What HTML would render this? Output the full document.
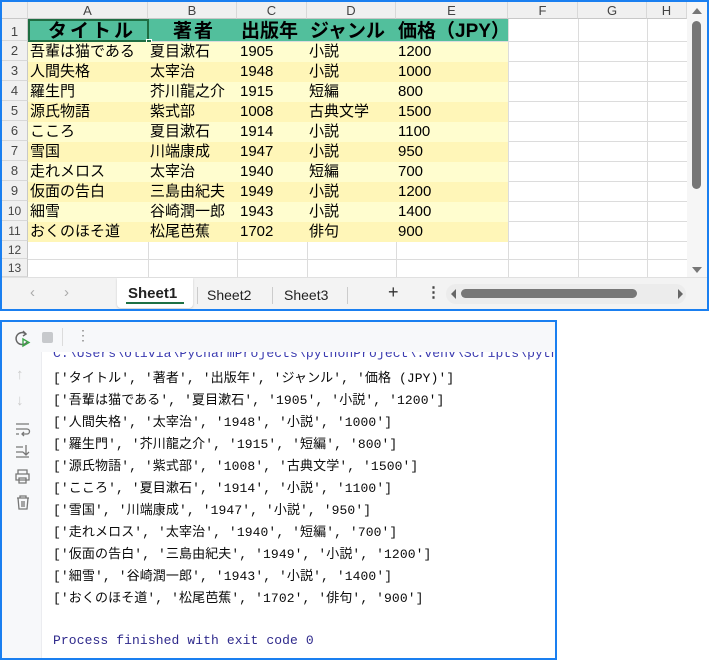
<!DOCTYPE html>
<html><head><meta charset="utf-8"><style>
*{margin:0;padding:0;box-sizing:border-box}
body{width:709px;height:660px;background:#fff;position:relative;overflow:hidden;font-family:"Liberation Sans","Noto Sans CJK JP",sans-serif}
.xl{position:absolute;left:0;top:0;width:709px;height:311px;border:2px solid #1a7ff0;background:#fff;overflow:hidden}
.abs{position:absolute}
.ch{position:absolute;top:0;height:17px;background:#f0f0f0;border-right:1px solid #d8d8d8;border-bottom:1px solid #c8c8c8;font-size:13px;color:#444;text-align:center;line-height:17px}
.rh{position:absolute;left:0;width:26px;background:#f0f0f0;border-bottom:1px solid #d8d8d8;border-right:1px solid #c8c8c8;font-size:12px;color:#444;text-align:center}
.row{position:absolute;left:26px;height:20px;font-size:15px;line-height:20px;color:#000}
.row span{position:absolute;top:0;white-space:nowrap}
.grid{position:absolute;background:#dcdcdc}
.con{position:absolute;left:0;top:320px;width:557px;height:340px;border:2px solid #1a7ff0;background:#fff;overflow:hidden}
.code{position:absolute;left:51px;font-family:"Liberation Mono","Noto Sans CJK JP",monospace;font-size:13px;color:#0a0a0a;white-space:pre;letter-spacing:0.1px}
</style></head><body>
<div class="xl">
 <div class="ch" style="left:0;width:26px"></div>
 <div class="ch" style="left:26px;width:120px">A</div>
 <div class="ch" style="left:146px;width:89px">B</div>
 <div class="ch" style="left:235px;width:70px">C</div>
 <div class="ch" style="left:305px;width:89px">D</div>
 <div class="ch" style="left:394px;width:112px">E</div>
 <div class="ch" style="left:506px;width:70px">F</div>
 <div class="ch" style="left:576px;width:69px">G</div>
 <div class="ch" style="left:645px;width:40px">H</div>
 <div class="grid" style="left:576px;top:17px;width:1px;height:258px"></div>
 <div class="grid" style="left:645px;top:17px;width:1px;height:258px"></div>
 <div class="grid" style="left:146px;top:239px;width:1px;height:36px"></div>
 <div class="grid" style="left:235px;top:239px;width:1px;height:36px"></div>
 <div class="grid" style="left:305px;top:239px;width:1px;height:36px"></div>
 <div class="grid" style="left:394px;top:239px;width:1px;height:36px"></div>
 <div class="grid" style="left:506px;top:17px;width:1px;height:258px"></div>
 <div class="grid" style="left:26px;top:39px;width:659px;height:1px"></div>
 <div class="grid" style="left:506px;top:59px;width:179px;height:1px"></div>
 <div class="grid" style="left:506px;top:79px;width:179px;height:1px"></div>
 <div class="grid" style="left:506px;top:99px;width:179px;height:1px"></div>
 <div class="grid" style="left:506px;top:119px;width:179px;height:1px"></div>
 <div class="grid" style="left:506px;top:139px;width:179px;height:1px"></div>
 <div class="grid" style="left:506px;top:159px;width:179px;height:1px"></div>
 <div class="grid" style="left:506px;top:179px;width:179px;height:1px"></div>
 <div class="grid" style="left:506px;top:199px;width:179px;height:1px"></div>
 <div class="grid" style="left:506px;top:219px;width:179px;height:1px"></div>
 <div class="grid" style="left:26px;top:239px;width:659px;height:1px"></div>
 <div class="grid" style="left:26px;top:257px;width:659px;height:1px"></div>
 <div class="rh" style="top:17px;height:22px;line-height:26px;font-size:13px">1</div>
 <div class="rh" style="top:39px;height:20px;line-height:20px;font-size:13px">2</div>
 <div class="rh" style="top:59px;height:20px;line-height:20px;font-size:13px">3</div>
 <div class="rh" style="top:79px;height:20px;line-height:20px;font-size:13px">4</div>
 <div class="rh" style="top:99px;height:20px;line-height:20px;font-size:13px">5</div>
 <div class="rh" style="top:119px;height:20px;line-height:20px;font-size:13px">6</div>
 <div class="rh" style="top:139px;height:20px;line-height:20px;font-size:13px">7</div>
 <div class="rh" style="top:159px;height:20px;line-height:20px;font-size:13px">8</div>
 <div class="rh" style="top:179px;height:20px;line-height:20px;font-size:13px">9</div>
 <div class="rh" style="top:199px;height:20px;line-height:20px">10</div>
 <div class="rh" style="top:219px;height:20px;line-height:20px">11</div>
 <div class="rh" style="top:239px;height:18px;line-height:18px">12</div>
 <div class="rh" style="top:257px;height:18px;line-height:18px">13</div>
 <div class="row" style="top:17px;height:22px;width:480px;background:#52bf9c;font-weight:bold;font-size:19px;line-height:26px">
  <span style="left:20px;letter-spacing:3px">タイトル</span>
  <span style="left:145px;letter-spacing:2px">著者</span>
  <span style="left:213px">出版年</span>
  <span style="left:282px">ジャンル</span>
  <span style="left:370px">価格（JPY）</span>
 </div>
 <div class="abs" style="left:26px;top:17px;width:121px;height:23px;border:2px solid #1f6e43"></div>
 <div class="abs" style="left:144px;top:37px;width:6px;height:6px;background:#1f6e43;border:1px solid #fff"></div>
 <div class="row" style="top:40px;width:480px;background:#fffdcf"><span style="left:2px">吾輩は猫である</span><span style="left:122px">夏目漱石</span><span style="left:212px">1905</span><span style="left:281px">小説</span><span style="left:370px">1200</span></div>
 <div class="row" style="top:60px;width:480px;background:#fff6b8"><span style="left:2px">人間失格</span><span style="left:122px">太宰治</span><span style="left:212px">1948</span><span style="left:281px">小説</span><span style="left:370px">1000</span></div>
 <div class="row" style="top:80px;width:480px;background:#fffdcf"><span style="left:2px">羅生門</span><span style="left:122px">芥川龍之介</span><span style="left:212px">1915</span><span style="left:281px">短編</span><span style="left:370px">800</span></div>
 <div class="row" style="top:100px;width:480px;background:#fff6b8"><span style="left:2px">源氏物語</span><span style="left:122px">紫式部</span><span style="left:212px">1008</span><span style="left:281px">古典文学</span><span style="left:370px">1500</span></div>
 <div class="row" style="top:120px;width:480px;background:#fffdcf"><span style="left:2px">こころ</span><span style="left:122px">夏目漱石</span><span style="left:212px">1914</span><span style="left:281px">小説</span><span style="left:370px">1100</span></div>
 <div class="row" style="top:140px;width:480px;background:#fff6b8"><span style="left:2px">雪国</span><span style="left:122px">川端康成</span><span style="left:212px">1947</span><span style="left:281px">小説</span><span style="left:370px">950</span></div>
 <div class="row" style="top:160px;width:480px;background:#fffdcf"><span style="left:2px">走れメロス</span><span style="left:122px">太宰治</span><span style="left:212px">1940</span><span style="left:281px">短編</span><span style="left:370px">700</span></div>
 <div class="row" style="top:180px;width:480px;background:#fff6b8"><span style="left:2px">仮面の告白</span><span style="left:122px">三島由紀夫</span><span style="left:212px">1949</span><span style="left:281px">小説</span><span style="left:370px">1200</span></div>
 <div class="row" style="top:200px;width:480px;background:#fffdcf"><span style="left:2px">細雪</span><span style="left:122px">谷崎潤一郎</span><span style="left:212px">1943</span><span style="left:281px">小説</span><span style="left:370px">1400</span></div>
 <div class="row" style="top:220px;width:480px;background:#fff6b8"><span style="left:2px">おくのほそ道</span><span style="left:122px">松尾芭蕉</span><span style="left:212px">1702</span><span style="left:281px">俳句</span><span style="left:370px">900</span></div>
 <div class="abs" style="left:685px;top:0;width:20px;height:275px;background:#f6f6f6"></div>
 <div class="abs" style="left:690px;top:6px;width:0;height:0;border-left:5px solid transparent;border-right:5px solid transparent;border-bottom:6px solid #777"></div>
 <div class="abs" style="left:690px;top:19px;width:9px;height:168px;border-radius:5px;background:#777"></div>
 <div class="abs" style="left:690px;top:265px;width:0;height:0;border-left:5px solid transparent;border-right:5px solid transparent;border-top:6px solid #777"></div>
 <div class="abs" style="left:0;top:275px;width:705px;height:32px;background:#f3f3f3;border-top:1px solid #e0e0e0"></div>
 <div class="abs" style="left:28px;top:282px;font-size:15px;color:#aaa">‹</div>
 <div class="abs" style="left:62px;top:282px;font-size:15px;color:#aaa">›</div>
 <div class="abs" style="left:115px;top:276px;width:76px;height:30px;background:#fff;border-radius:0 0 4px 4px;box-shadow:0 1px 2px #ccc"></div>
 <div class="abs" style="left:126px;top:283px;font-size:15px;font-weight:bold;color:#222">Sheet1</div>
 <div class="abs" style="left:124px;top:300px;width:58px;height:2px;background:#1e7145"></div>
 <div class="abs" style="left:195px;top:285px;width:1px;height:17px;background:#ccc"></div>
 <div class="abs" style="left:205px;top:285px;font-size:14px;color:#222">Sheet2</div>
 <div class="abs" style="left:270px;top:285px;width:1px;height:17px;background:#ccc"></div>
 <div class="abs" style="left:282px;top:285px;font-size:14px;color:#222">Sheet3</div>
 <div class="abs" style="left:345px;top:285px;width:1px;height:17px;background:#ccc"></div>
 <div class="abs" style="left:386px;top:280px;font-size:18px;color:#333">+</div>
 <div class="abs" style="left:424px;top:281px;font-size:15px;font-weight:bold;color:#444">⋮</div>
 <div class="abs" style="left:444px;top:282px;width:240px;height:20px;border-radius:10px;background:#ececec"></div>
 <div class="abs" style="left:449px;top:287px;border-top:5px solid transparent;border-bottom:5px solid transparent;border-right:5px solid #666"></div>
 <div class="abs" style="left:459px;top:287px;width:176px;height:9px;border-radius:5px;background:#777"></div>
 <div class="abs" style="left:676px;top:287px;border-top:5px solid transparent;border-bottom:5px solid transparent;border-left:5px solid #666"></div>
</div>

<div class="con">
 <div class="code" style="top:24px;color:#3b3bb0">C:\Users\olivia\PycharmProjects\pythonProject\.venv\Scripts\python.exe</div>
 <div class="abs" style="left:0;top:0;width:553px;height:30px;background:#f7f8fa"></div>
 <svg class="abs" style="left:12px;top:8px" width="20" height="18" viewBox="0 0 20 18"><path d="M12 4 A6 6 0 1 0 13 12" fill="none" stroke="#666" stroke-width="1.5"/><path d="M9 1 L12 4 L9 6" fill="none" stroke="#666" stroke-width="1.4"/><path d="M9 9 L15 12.5 L9 16 Z" fill="none" stroke="#3ca548" stroke-width="1.4"/></svg>
 <div class="abs" style="left:40px;top:10px;width:11px;height:11px;background:#c7c9cc;border-radius:2px"></div>
 <div class="abs" style="left:60px;top:6px;width:1px;height:18px;background:#dcdcdc"></div>
 <div class="abs" style="left:74px;top:5px;font-size:14px;color:#888">⋮</div>
 <div class="abs" style="left:0;top:30px;width:40px;height:310px;background:#f7f8fa;border-right:1px solid #ebecf0"></div>
 <div class="abs" style="left:14px;top:44px;color:#ccc;font-size:15px">↑</div>
 <div class="abs" style="left:14px;top:70px;color:#ccc;font-size:15px">↓</div>
 <svg class="abs" style="left:12px;top:100px" width="18" height="110" viewBox="0 0 18 110" fill="none" stroke="#777" stroke-width="1.3"><path d="M2 2H15M2 7H13a2.5 2.5 0 0 1 0 5H8M10 10l-2 2 2 2M2 12H5"/><path d="M2 25H9M2 30H9M2 35H15M12 23V33M9 30l3 3 3-3"/><path d="M4 52V48H13V52M2 52H15V58H2ZM5 56H12V61H5Z"/><path d="M3 76H15M6 76V74H12V76M4 76L5 87H13L14 76M8 79V85M10 79V85"/></svg>
 <div class="code" style="top:45px">['タイトル', '著者', '出版年', 'ジャンル', '価格 (JPY)']</div>
 <div class="code" style="top:67px">['吾輩は猫である', '夏目漱石', '1905', '小説', '1200']</div>
 <div class="code" style="top:89px">['人間失格', '太宰治', '1948', '小説', '1000']</div>
 <div class="code" style="top:111px">['羅生門', '芥川龍之介', '1915', '短編', '800']</div>
 <div class="code" style="top:133px">['源氏物語', '紫式部', '1008', '古典文学', '1500']</div>
 <div class="code" style="top:155px">['こころ', '夏目漱石', '1914', '小説', '1100']</div>
 <div class="code" style="top:177px">['雪国', '川端康成', '1947', '小説', '950']</div>
 <div class="code" style="top:199px">['走れメロス', '太宰治', '1940', '短編', '700']</div>
 <div class="code" style="top:221px">['仮面の告白', '三島由紀夫', '1949', '小説', '1200']</div>
 <div class="code" style="top:243px">['細雪', '谷崎潤一郎', '1943', '小説', '1400']</div>
 <div class="code" style="top:265px">['おくのほそ道', '松尾芭蕉', '1702', '俳句', '900']</div>
 <div class="code" style="top:311px;color:#2f2a8c">Process finished with exit code 0</div>
</div>
</body></html>
